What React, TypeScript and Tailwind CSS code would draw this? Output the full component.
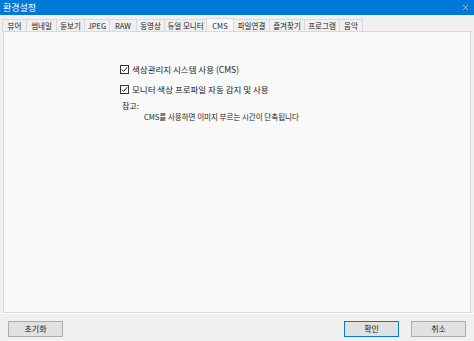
import { X } from 'lucide-react';

const tabs: [string, number][] = [
  ['뷰어', 25],
  ['썸네일', 31],
  ['돋보기', 29],
  ['JPEG', 26],
  ['RAW', 28],
  ['동영상', 29],
  ['듀얼 모니터', 43],
  ['CMS', 28],
  ['파일연결', 37],
  ['즐겨찾기', 36],
  ['프로그램', 36],
  ['음악', 24],
];

function Check({ label }: { label: string }) {
  return (
    <label className="flex items-center gap-[3px]">
      <span className="w-[9px] h-[9px] border border-[#333] bg-white flex items-center justify-center">
        <svg width="7" height="7" viewBox="0 0 7 7">
          <path d="M0.8 3.6 L2.7 5.4 L6.2 1.2" fill="none" stroke="#222" strokeWidth="1" />
        </svg>
      </span>
      <span>{label}</span>
    </label>
  );
}

export default function App() {
  return (
    <div
      className="w-[474px] h-[341px] bg-[#f0f0f0] flex flex-col text-[8px] text-[#222] overflow-hidden"
      style={{ fontFamily: '"Noto Sans CJK KR", "Liberation Sans", sans-serif' }}
    >
      <div className="h-[15px] bg-[#0078d7] flex items-center justify-between pl-[3px] pr-[4px] text-white text-[9px]">
        <span>환경설정</span>
        <X size={9} strokeWidth={1.5} />
      </div>

      <div className="px-[3px] pt-[3px] flex-1 flex flex-col">
        <div className="flex h-[14px] items-end text-[7.5px]">
          {tabs.map(([t, w]) => {
            const active = t === 'CMS';
            return (
              <div
                key={t}
                style={{ width: w }}
                className={
                  active
                    ? 'h-[14px] bg-[#f9f9f9] border border-b-0 border-[#d9d9d9] -ml-px flex items-center justify-center leading-none'
                    : 'h-[13px] bg-[#f0f0f0] border border-b-0 border-[#d9d9d9] -ml-px flex items-center justify-center leading-none'
                }
              >
                {t}
              </div>
            );
          })}
        </div>
        <div className="flex-1 border border-[#d9d9d9] bg-[#f9f9f9] -mt-px">
          <div className="pl-[116px] pt-[31px] flex flex-col">
            <div className="text-[8.5px]">
              <Check label="색상관리지 시스템 사용 (CMS)" />
            </div>
            <div className="mt-[7px] text-[8.5px]">
              <Check label="모니터 색상 프로파일 자동 감지 및 사용" />
            </div>
            <div className="mt-[4px] pl-[2px]">참고:</div>
            <div className="pl-[24px] -mt-px text-[7.5px]">CMS를 사용하면 이미지 부르는 시간이 단축됩니다</div>
          </div>
        </div>
      </div>

      <div className="border-t border-[#fff] h-[28px] flex items-start justify-between px-[8px] pt-[7px]">
        <button className="w-[55px] h-[16px] bg-[#e1e1e1] border border-[#adadad] leading-none">초기화</button>
        <div className="flex gap-[12px]">
          <button className="w-[55px] h-[16px] bg-[#e1e1e1] border border-[#0078d7] leading-none">확인</button>
          <button className="w-[55px] h-[16px] bg-[#e1e1e1] border border-[#adadad] leading-none">취소</button>
        </div>
      </div>
    </div>
  );
}
